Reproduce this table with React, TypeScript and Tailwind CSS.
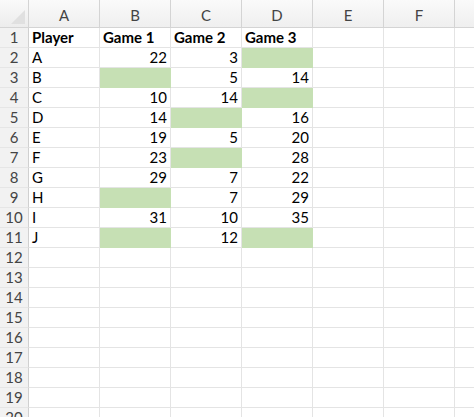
const cols = ["A", "B", "C", "D", "E", "F", ""];

type Cell = { v?: string; num?: boolean; bold?: boolean; fill?: boolean };

const data: Cell[][] = [
  [{ v: "Player", bold: true }, { v: "Game 1", bold: true }, { v: "Game 2", bold: true }, { v: "Game 3", bold: true }],
  [{ v: "A" }, { v: "22", num: true }, { v: "3", num: true }, { fill: true }],
  [{ v: "B" }, { fill: true }, { v: "5", num: true }, { v: "14", num: true }],
  [{ v: "C" }, { v: "10", num: true }, { v: "14", num: true }, { fill: true }],
  [{ v: "D" }, { v: "14", num: true }, { fill: true }, { v: "16", num: true }],
  [{ v: "E" }, { v: "19", num: true }, { v: "5", num: true }, { v: "20", num: true }],
  [{ v: "F" }, { v: "23", num: true }, { fill: true }, { v: "28", num: true }],
  [{ v: "G" }, { v: "29", num: true }, { v: "7", num: true }, { v: "22", num: true }],
  [{ v: "H" }, { fill: true }, { v: "7", num: true }, { v: "29", num: true }],
  [{ v: "I" }, { v: "31", num: true }, { v: "10", num: true }, { v: "35", num: true }],
  [{ v: "J" }, { fill: true }, { v: "12", num: true }, { fill: true }],
];

export default function App() {
  const rows = Array.from({ length: 20 }, (_, i) => i + 1);
  return (
    <div className="w-[474px] h-[417px] overflow-hidden bg-white font-['Lato',sans-serif] text-[15px]">
      <div className="flex h-[28px]">
        <div className="w-[29px] shrink-0 relative bg-gradient-to-b from-[#fafafa] to-[#ececec] border-r border-b border-[#d4d4d4]">
          <div className="absolute right-[3px] bottom-[3px] w-0 h-0 border-l-[14px] border-l-transparent border-b-[14px] border-b-[#e0e0e0]" />
        </div>
        {cols.map((c, i) => (
          <div
            key={i}
            className="w-[71px] shrink-0 flex items-center justify-center pt-[4px] bg-gradient-to-b from-[#fafafa] to-[#efefef] border-r border-b border-[#d4d4d4] text-[#444] text-[15px]"
          >
            {c}
          </div>
        ))}
      </div>
      {rows.map((r) => {
        const row = data[r - 1] || [];
        return (
          <div key={r} className="flex h-[20px]">
            <div className="w-[29px] shrink-0 flex items-center justify-center bg-[#f2f2f2] border-r border-b border-r-[#d0d0d0] border-b-[#e6e6e6] text-[#444] text-[15px]">
              {r}
            </div>
            {cols.map((_, ci) => {
              const cell = row[ci] || {};
              return (
                <div
                  key={ci}
                  className={`w-[71px] shrink-0 flex items-center px-[3px] border-r border-b leading-none text-black ${
                    cell.fill ? "bg-[#c6e0b4] border-[#c6e0b4]" : "border-[#e4e4e4]"
                  } ${cell.num ? "justify-end" : "justify-start"} ${cell.bold ? "font-bold" : ""}`}
                >
                  {cell.v}
                </div>
              );
            })}
          </div>
        );
      })}
    </div>
  );
}
